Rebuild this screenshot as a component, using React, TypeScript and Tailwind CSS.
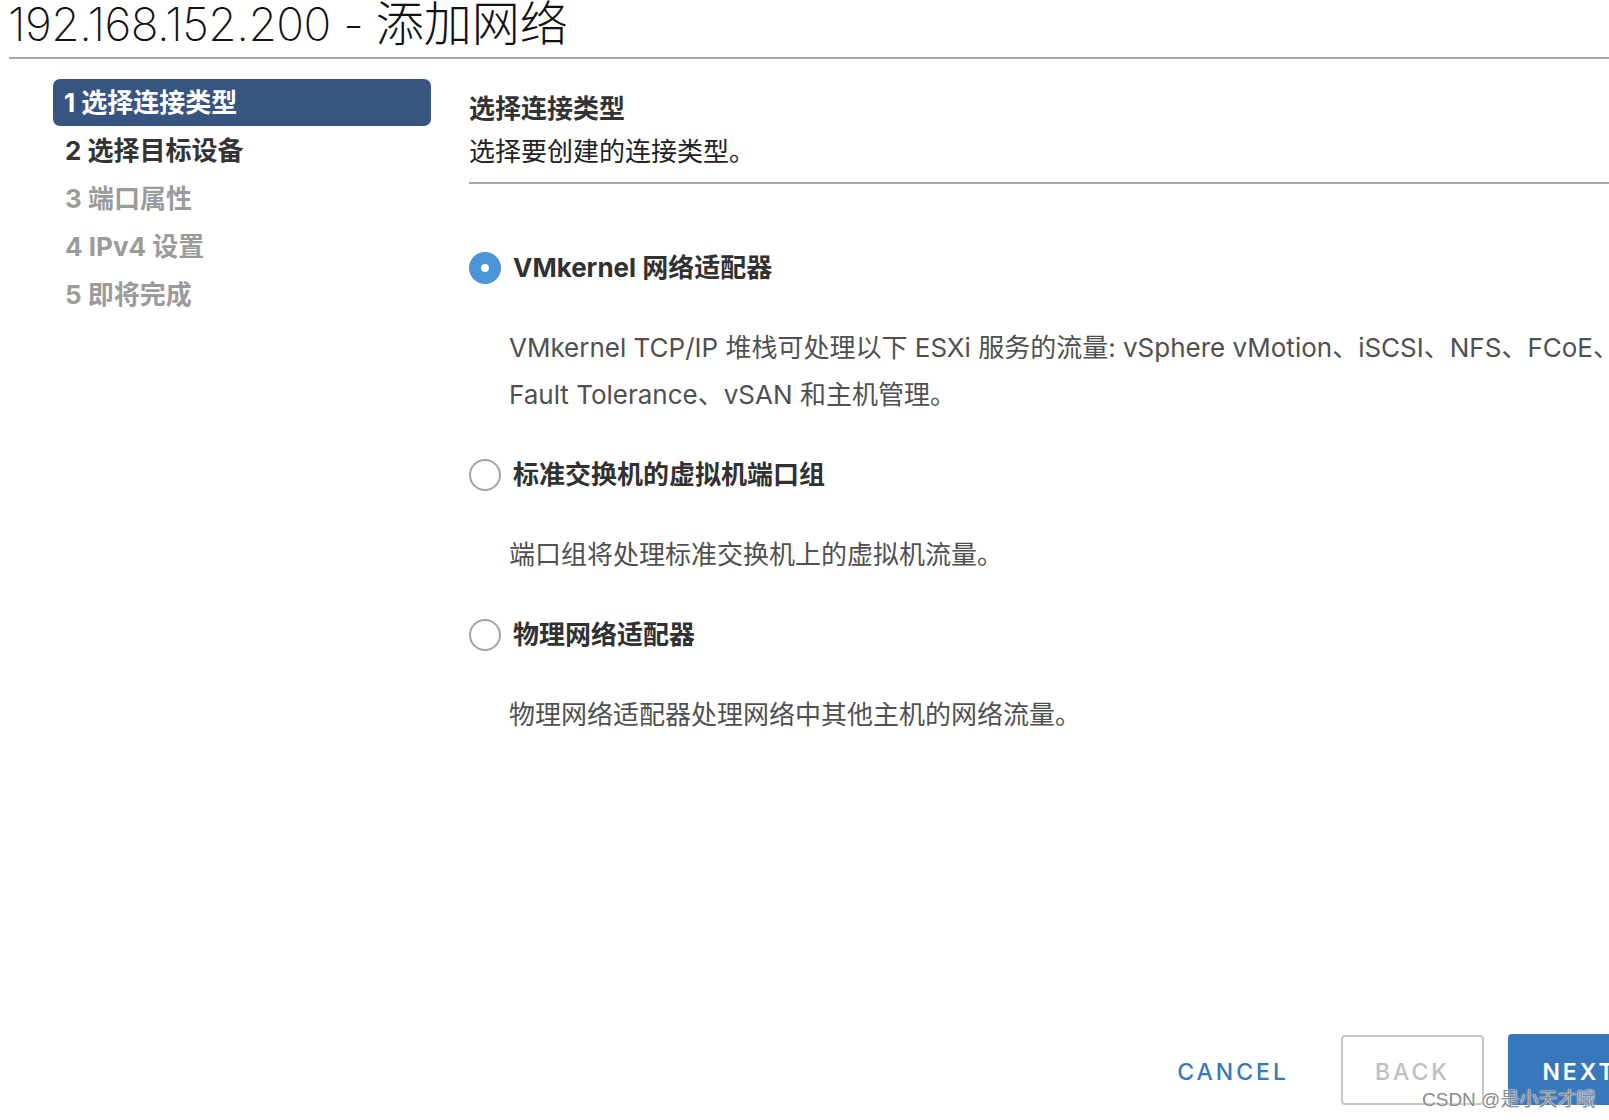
import React from "react";

const FONT = '"Inter", "Noto Sans CJK SC", sans-serif';

const steps = [
  { label: "1 选择连接类型", state: "active" },
  { label: "2 选择目标设备", state: "next" },
  { label: "3 端口属性", state: "disabled" },
  { label: "4 IPv4 设置", state: "disabled" },
  { label: "5 即将完成", state: "disabled" },
];

function Radio({ checked }: { checked: boolean }) {
  return checked ? (
    <span className="flex h-[32px] w-[32px] shrink-0 items-center justify-center rounded-full bg-[#4a95d6]">
      <span className="h-[8px] w-[8px] rounded-full bg-white" />
    </span>
  ) : (
    <span className="h-[32px] w-[32px] shrink-0 rounded-full border-2 border-[#a3a3a3] bg-white" />
  );
}

function Option({
  checked,
  title,
  children,
}: {
  checked: boolean;
  title: string;
  children: React.ReactNode;
}) {
  return (
    <div className="flex flex-col">
      <label className="flex h-[32px] items-center gap-[12px]">
        <Radio checked={checked} />
        <span className="text-[26px] font-bold leading-[32px] text-[#313131]">{title}</span>
      </label>
      <div className="mt-[40px] whitespace-nowrap pl-[40px] text-[26px] leading-[47px] text-[#505050]">
        {children}
      </div>
    </div>
  );
}

export default function App() {
  return (
    <div
      className="relative h-[1120px] w-[1609px] overflow-hidden bg-white"
      style={{ fontFamily: FONT }}
    >
      <div className="flex h-[1120px] w-[1675px] flex-col">
        {/* dialog header */}
        <h1 className="h-[47px] whitespace-nowrap pl-[8px] leading-[47px] text-[#111111]">
          <span className="text-[46px] font-extralight tracking-[-0.5px]">192.168.152.200 - </span>
          <span className="text-[48px] font-extralight">添加网络</span>
        </h1>
        <div className="ml-[9px] mt-[10px] h-[2px] bg-[#a8a8a8]" />

        <div className="flex flex-1 pt-[20px]">
          {/* wizard steps */}
          <nav className="ml-[53px] flex w-[378px] shrink-0 flex-col gap-[1px]">
            {steps.map((s) => (
              <div
                key={s.label}
                className={
                  s.state === "active"
                    ? "flex h-[47px] items-center rounded-[7px] bg-[#375580] pl-[11px] text-[26px] font-bold text-white"
                    : s.state === "next"
                    ? "flex h-[47px] items-center pl-[12px] text-[26px] font-bold text-[#333333]"
                    : "flex h-[47px] items-center pl-[12px] text-[26px] font-bold text-[#9b9b9b]"
                }
              >
                {s.label}
              </div>
            ))}
          </nav>

          {/* step content */}
          <main className="ml-[38px] flex flex-1 flex-col pt-[8px]">
            <h2 className="text-[26px] font-bold leading-[43px] text-[#333333]">选择连接类型</h2>
            <p className="text-[26px] leading-[43px] text-[#222222]">选择要创建的连接类型。</p>
            <div className="mt-[9px] h-[2px] bg-[#a8a8a8]" />

            <div className="mt-[68px] flex flex-col gap-[41px]">
              <Option checked title="VMkernel 网络适配器">
                VMkernel TCP/IP 堆栈可处理以下 ESXi 服务的流量: vSphere vMotion、iSCSI、NFS、FCoE、
                <br />
                Fault Tolerance、vSAN 和主机管理。
              </Option>
              <Option checked={false} title="标准交换机的虚拟机端口组">
                端口组将处理标准交换机上的虚拟机流量。
              </Option>
              <Option checked={false} title="物理网络适配器">
                物理网络适配器处理网络中其他主机的网络流量。
              </Option>
            </div>
          </main>
        </div>

        {/* dialog footer */}
        <footer className="flex items-center justify-end pb-[15px] pr-[24px]">
          <button className="h-[70px] px-[26px] pt-[5px] text-[23px] font-medium uppercase tracking-[3px] text-[#3a78bb]">
            Cancel
          </button>
          <button className="ml-[26px] h-[70px] w-[143px] rounded-[4px] border-2 border-[#c6c6c6] pt-[5px] text-[23px] font-medium uppercase tracking-[3px] text-[#c0c0c0]">
            Back
          </button>
          <button className="ml-[24px] h-[71px] w-[143px] rounded-[4px] bg-[#3877ba] pt-[5px] text-[23px] font-semibold uppercase tracking-[3px] text-white">
            Next
          </button>
        </footer>
      </div>

      {/* watermark */}
      <div
        className="absolute left-[1422px] top-[1087px] whitespace-nowrap text-[19px] leading-[26px] text-[#8a8a8a]"
        style={{
          fontFamily: '"Liberation Sans", "Noto Sans CJK SC", sans-serif',
          textShadow: "0 0 2px #ffffff, 0 0 1px #ffffff",
        }}
      >
        CSDN @是小天才哦
      </div>
    </div>
  );
}
